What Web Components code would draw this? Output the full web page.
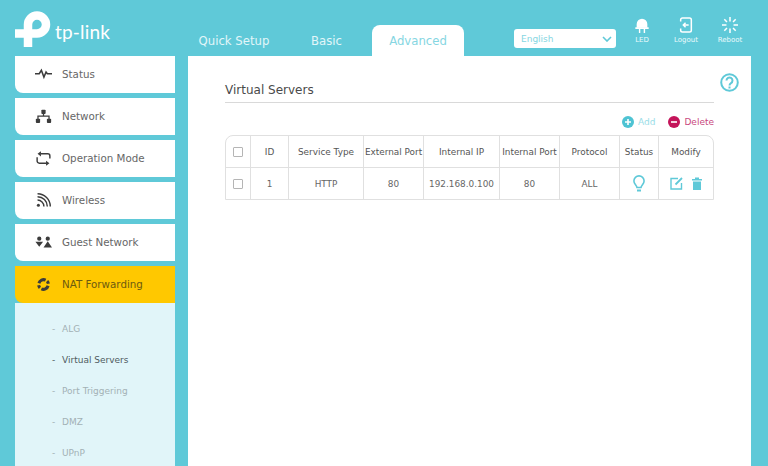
<!DOCTYPE html>
<html>
<head>
<meta charset="utf-8">
<title>Virtual Servers</title>
<style>
  html, body { margin: 0; height: 100%; overflow: hidden; }
  body { background: #5fc9d8; font-family: "DejaVu Sans", sans-serif; }
</style>
</head>
<body>
<tp-app></tp-app>
<script>
const ICONS = {
  status: `<path d="M0 8h5l2.500-4 3 8 2.500-6 1.500 2h5.500" fill="none" stroke="currentColor" stroke-width="1.800"/>`,
  network: `<rect x="7.500" y="1" width="5" height="5" rx="1"/><rect x="1" y="11.500" width="5" height="5" rx="1"/><rect x="14" y="11.500" width="5" height="5" rx="1"/><path d="M3.500 12V8.500h13V12M10 5v4" fill="none" stroke="currentColor" stroke-width="1.500"/>`,
  mode: `<path d="M7 3.500h8a2.500 2.500 0 0 1 2.500 2.500v3M13 14.500H5A2.500 2.500 0 0 1 2.500 12V7.500" fill="none" stroke="currentColor" stroke-width="1.700"/><path d="M7 .5v6L3 3.500zM13 11.500v6l4-3z"/>`,
  wifi: `<circle cx="4" cy="14.500" r="1.800"/><path d="M3 8.500a7.500 7.500 0 0 1 7.500 7.500M3 4.500a11.500 11.500 0 0 1 11.500 11.500M3 1a15 15 0 0 1 15 15" fill="none" stroke="currentColor" stroke-width="1.700"/>`,
  guest: `<circle cx="5" cy="4.500" r="2.500"/><circle cx="15" cy="4.500" r="2.500"/><path d="M.5 8h9L5 14zM15 7.500l5 7.500H10z"/>`,
  nat: `<g fill="none" stroke="currentColor" stroke-width="3.600"><path d="M4.600 7.500A5.800 5.800 0 0 1 12.500 3.800"/><path d="M15.400 10.500A5.800 5.800 0 0 1 7.500 14.200"/><path d="M5.800 13A5.800 5.800 0 0 1 4.300 10"/><path d="M14.200 5A5.800 5.800 0 0 1 15.700 8"/></g>`
};

class TpLogo extends HTMLElement {
  constructor() {
    super();
    this.attachShadow({ mode: "open" }).innerHTML = `
      <style>
        :host { display: flex; align-items: center; color: #fff; }
        svg { display: block; width: 37px; height: 37px; }
        span { font: 19px/1 Lato, sans-serif; margin-left: 3px; margin-top: 3px; letter-spacing: .2px; }
      </style>
      <svg viewBox="0 0 37 37">
        <path d="M13 36V13.500a9 9 0 1 1 9 9H0" fill="none" stroke="#fff" stroke-width="8.500"/>
      </svg>
      <span>tp-link</span>`;
  }
}

class TpTabs extends HTMLElement {
  constructor() {
    super();
    this.attachShadow({ mode: "open" }).innerHTML = `
      <style>
        :host { display: flex; align-self: flex-end; height: 31px; font-size: 11.700px; color: #e2f6f9; white-space: nowrap; }
        a { display: flex; align-items: center; justify-content: center; box-sizing: border-box; }
        .active { background: #fff; color: #86d6e2; border-radius: 8px 8px 0 0; width: 92px; }
      </style>
      <a style="width:72px;margin-right:41px">Quick Setup</a>
      <a style="width:31px;margin-right:30px">Basic</a>
      <a class="active">Advanced</a>`;
  }
}

class TpLang extends HTMLElement {
  constructor() {
    super();
    this.attachShadow({ mode: "open" }).innerHTML = `
      <style>
        :host { display: flex; align-items: center; justify-content: space-between; box-sizing: border-box;
                width: 102px; height: 19px; padding: 0 4px 0 7px; background: #fff; border-radius: 3px;
                font-size: 9px; color: #86d6e2; }
        svg { width: 10px; height: 6px; }
      </style>
      <span>English</span>
      <svg viewBox="0 0 10 6"><path d="M1 1l4 4 4-4" fill="none" stroke="#5fc9d8" stroke-width="1.600"/></svg>`;
  }
}

class TpTool extends HTMLElement {
  constructor() {
    super();
    this.attachShadow({ mode: "open" }).innerHTML = `
      <style>
        :host { display: flex; flex-direction: column; align-items: center; width: 36px; color: #fff; }
        ::slotted(svg) { display: block; width: 16px; height: 16px; }
        span { font-size: 7px; line-height: 9px; margin-top: 3px; color: #eafafc; }
      </style>
      <slot></slot>
      <span>${this.getAttribute("label")}</span>`;
  }
}

class TpHeader extends HTMLElement {
  constructor() {
    super();
    this.attachShadow({ mode: "open" }).innerHTML = `
      <style>
        :host { display: flex; height: 56px; padding: 11px 0 0 15px; box-sizing: border-box; }
        tp-logo { width: 183px; align-self: flex-start; }
        tp-lang { margin: 18px 0 0 50px; }
        .tools { display: flex; margin: 6px 0 0 8px; gap: 8px; }
      </style>
      <tp-logo></tp-logo>
      <tp-tabs></tp-tabs>
      <tp-lang></tp-lang>
      <div class="tools">
        <tp-tool label="LED"><svg viewBox="0 0 18 18" fill="#fff"><path d="M3 12V8a6 6 0 0 1 12 0v4z"/><path d="M1.500 11.500h15v2h-15zM5.500 13h1.600v5H5.500zM10.900 13h1.600v5h-1.600z"/></svg></tp-tool>
        <tp-tool label="Logout"><svg viewBox="0 0 18 18" fill="none" stroke="#fff" stroke-width="1.700"><path d="M3 5V3a2 2 0 0 1 2-2h8a2 2 0 0 1 2 2v12a2 2 0 0 1-2 2H5a2 2 0 0 1-2-2v-2"/><path d="M12 9H6M8.500 6.500L6 9l2.500 2.500"/></svg></tp-tool>
        <tp-tool label="Reboot"><svg viewBox="0 0 18 18" fill="none" stroke="#fff" stroke-width="1.700"><path d="M9 0v5M9 13v5M0 9h5M13 9h5M2.600 2.600l3 3M12.400 12.400l3 3M15.400 2.600l-3 3M5.600 12.400l-3 3"/></svg></tp-tool>
      </div>`;
  }
}

class TpNavItem extends HTMLElement {
  constructor() {
    super();
    const icon = ICONS[this.getAttribute("icon")];
    this.attachShadow({ mode: "open" }).innerHTML = `
      <style>
        :host { display: flex; align-items: center; height: 37px; background: #fff; border-radius: 0 0 0 8px;
                font-size: 10.300px; color: #666; box-sizing: border-box; padding-bottom: 1px; }
        :host([active]) { background: #ffc800; color: #6c5a10; }
        svg { width: 17px; height: 17px; margin-left: 20px; margin-right: 10px; color: #3c3c3c; fill: currentColor; flex: none; }
      </style>
      <svg viewBox="0 0 20 18">${icon}</svg>
      <slot></slot>`;
  }
}

class TpSubMenu extends HTMLElement {
  constructor() {
    super();
    this.attachShadow({ mode: "open" }).innerHTML = `
      <style>
        :host { display: flex; flex-direction: column; flex: 1; background: #e1f5f9; padding-top: 18px; gap: 15px; }
      </style>
      <slot></slot>`;
  }
}

class TpSubItem extends HTMLElement {
  constructor() {
    super();
    this.attachShadow({ mode: "open" }).innerHTML = `
      <style>
        :host { display: flex; align-items: center; height: 16px; font-size: 9px; color: #a3b1b5; }
        :host([active]) { color: #4f5b5f; }
        i { font-style: normal; width: 10px; margin-left: 37px; }
      </style>
      <i>-</i><slot></slot>`;
  }
}

class TpSidebar extends HTMLElement {
  constructor() {
    super();
    this.attachShadow({ mode: "open" }).innerHTML = `
      <style>
        :host { display: flex; flex-direction: column; width: 160px; gap: 5px; margin-left: 15px; flex: none; }
        .group { display: flex; flex-direction: column; flex: 1; }
      </style>
      <tp-nav-item icon="status">Status</tp-nav-item>
      <tp-nav-item icon="network">Network</tp-nav-item>
      <tp-nav-item icon="mode">Operation Mode</tp-nav-item>
      <tp-nav-item icon="wifi">Wireless</tp-nav-item>
      <tp-nav-item icon="guest">Guest Network</tp-nav-item>
      <div class="group">
        <tp-nav-item icon="nat" active>NAT Forwarding</tp-nav-item>
        <tp-sub-menu>
          <tp-sub-item>ALG</tp-sub-item>
          <tp-sub-item active>Virtual Servers</tp-sub-item>
          <tp-sub-item>Port Triggering</tp-sub-item>
          <tp-sub-item>DMZ</tp-sub-item>
          <tp-sub-item>UPnP</tp-sub-item>
        </tp-sub-menu>
      </div>`;
  }
}

class TpTable extends HTMLElement {
  constructor() {
    super();
    const box = `<span class="box"></span>`;
    this.attachShadow({ mode: "open" }).innerHTML = `
      <style>
        :host { display: block; font-size: 8.900px; color: #666; }
        .wrap { border: 1px solid #e0e0e0; border-radius: 8px 8px 0 0; overflow: hidden; }
        .row { display: grid; grid-template-columns: 24px 38px 75px 60px 76px 60px 60px 39px 1fr; }
        .row + .row { border-top: 1px solid #e0e0e0; }
        .head { height: 31px; }
        .body { height: 31px; }
        .row > div { display: flex; align-items: center; justify-content: center; white-space: nowrap; border-left: 1px solid #e0e0e0; }
        .row > div:first-child { border-left: 0; }
        .head > div { color: #555; }
        .box { display: block; width: 8px; height: 8px; border: 1px solid #b5b5b5; border-radius: 1px; }
        svg { display: block; }
        .mod { gap: 9px; }
      </style>
      <div class="wrap">
        <div class="row head">
          <div>${box}</div><div>ID</div><div>Service Type</div><div>External Port</div><div>Internal IP</div>
          <div>Internal Port</div><div>Protocol</div><div>Status</div><div>Modify</div>
        </div>
        <div class="row body">
          <div>${box}</div><div>1</div><div>HTTP</div><div>80</div><div>192.168.0.100</div>
          <div>80</div><div>ALL</div>
          <div>
            <svg width="12" height="17" viewBox="0 0 12 17" fill="none" stroke="#5fc9d8" stroke-width="1.600"><path d="M4 12.500C3.500 10 .9 9 .9 6a5.100 5.100 0 0 1 10.200 0c0 3-2.600 4-3.100 6.500z"/><path d="M4 15.500h4" stroke-width="2"/></svg>
          </div>
          <div class="mod">
            <svg width="13" height="13" viewBox="0 0 13 13" fill="none" stroke="#5fc9d8" stroke-width="1.400"><path d="M8 1.500H1v10.500h10.500V6"/><path d="M5.500 7.500L12 1" stroke-width="1.800"/></svg>
            <svg width="10" height="13" viewBox="0 0 10 13" fill="#5fc9d8"><path d="M0 2h10v1.500H0zM3 .5h4V2H3zM1 4.500h8V13H1z"/></svg>
          </div>
        </div>
      </div>`;
  }
}

class TpAction extends HTMLElement {
  constructor() {
    super();
    const minus = this.hasAttribute("minus");
    const color = minus ? "#c4145a" : "#4ec3d3";
    this.attachShadow({ mode: "open" }).innerHTML = `
      <style>
        :host { display: flex; align-items: center; gap: 4px; font-size: 9px; color: ${minus ? "#c9487e" : "#9adde7"}; }
      </style>
      <svg width="12" height="12" viewBox="0 0 12 12">
        <circle cx="6" cy="6" r="6" fill="${color}"/>
        <path d="${minus ? "M3 6h6" : "M3 6h6M6 3v6"}" stroke="#fff" stroke-width="1.600"/>
      </svg>
      <slot></slot>`;
  }
}

class TpMain extends HTMLElement {
  constructor() {
    super();
    this.attachShadow({ mode: "open" }).innerHTML = `
      <style>
        :host { display: block; position: relative; flex: none; width: 563px; margin-left: 13px; background: #fff;
                padding: 27px 37px 0; box-sizing: border-box; }
        h2 { margin: 0; font-size: 12px; font-weight: normal; color: #4a4a4a; line-height: 15px; padding-bottom: 4px; border-bottom: 1px solid #d9d9d9; }
        .actions { display: flex; justify-content: flex-end; gap: 13px; height: 13px; margin: 12px 0 7px 0; }
        .help { position: absolute; right: 12px; top: 17px; }
      </style>
      <svg class="help" width="19" height="19" viewBox="0 0 19 19" fill="none" stroke="#5fc9d8" stroke-width="2">
        <circle cx="9.500" cy="9.500" r="8.300"/>
        <path d="M6.500 7.500a3 3 0 1 1 4.500 2.600c-1 .6-1.500 1-1.500 2.400"/>
        <path d="M9.500 13.500v2"/>
      </svg>
      <h2>Virtual Servers</h2>
      <div class="actions">
        <tp-action>Add</tp-action>
        <tp-action minus>Delete</tp-action>
      </div>
      <tp-table></tp-table>`;
  }
}

class TpApp extends HTMLElement {
  constructor() {
    super();
    this.attachShadow({ mode: "open" }).innerHTML = `
      <style>
        :host { display: flex; flex-direction: column; height: 466px; overflow: hidden; }
        .content { display: flex; flex: 1; min-height: 0; }
      </style>
      <tp-header></tp-header>
      <div class="content">
        <tp-sidebar></tp-sidebar>
        <tp-main></tp-main>
      </div>`;
  }
}

customElements.define("tp-logo", TpLogo);
customElements.define("tp-tabs", TpTabs);
customElements.define("tp-lang", TpLang);
customElements.define("tp-tool", TpTool);
customElements.define("tp-header", TpHeader);
customElements.define("tp-nav-item", TpNavItem);
customElements.define("tp-sub-menu", TpSubMenu);
customElements.define("tp-sub-item", TpSubItem);
customElements.define("tp-sidebar", TpSidebar);
customElements.define("tp-table", TpTable);
customElements.define("tp-action", TpAction);
customElements.define("tp-main", TpMain);
customElements.define("tp-app", TpApp);
</script>
</body>
</html>
